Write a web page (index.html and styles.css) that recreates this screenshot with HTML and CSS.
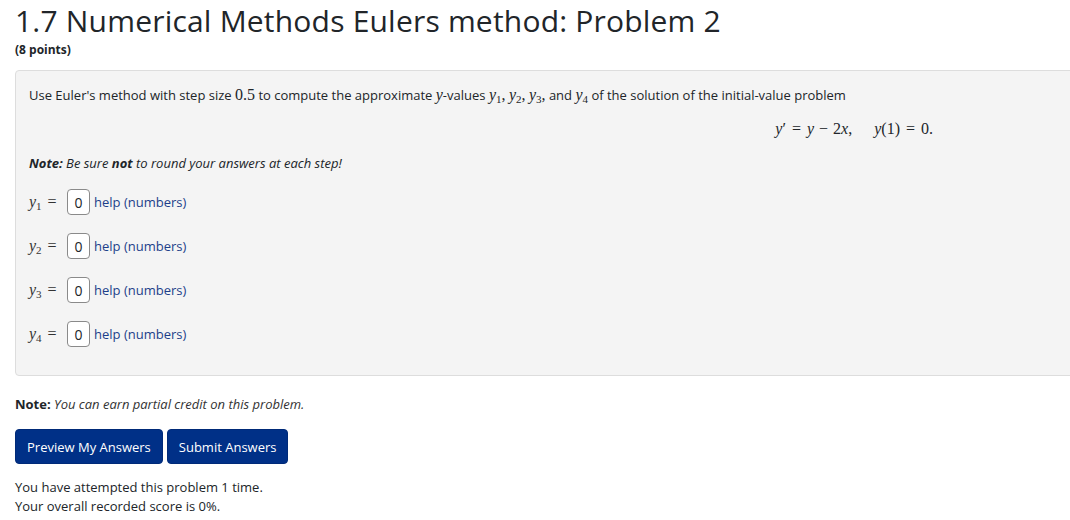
FILE: index.html
```html
<!DOCTYPE html>
<html>
<head>
<meta charset="utf-8">
<link rel="stylesheet" href="styles.css">
</head>
<body>
<div class="page">
  <h2 class="title">1.7 Numerical Methods Eulers method: Problem 2</h2>
  <div class="points">(8 points)</div>
  <div class="problem">
    <p class="intro">Use Euler's method with step size <span class="m">0.5</span> to compute the approximate <span class="mi">y</span>-values <span class="mi">y</span><sub class="sub">1</sub><span class="m">,</span> <span class="mi">y</span><sub class="sub">2</sub><span class="m">,</span> <span class="mi">y</span><sub class="sub">3</sub><span class="m">,</span> and <span class="mi">y</span><sub class="sub">4</sub> of the solution of the initial-value problem</p>
    <div class="display"><span class="mi">y</span><span class="m">&prime;</span><span class="rel">=</span><span class="mi">y</span><span class="bin">&minus;</span><span class="m">2</span><span class="mi">x</span><span class="m">,</span><span class="gap"></span><span class="mi">y</span><span class="m">(1)</span><span class="rel">=</span><span class="m">0.</span></div>
    <p class="note"><b>Note:</b> Be sure <b>not</b> to round your answers at each step!</p>
    <div class="answers">
      <div class="row"><span class="lbl"><span class="mi">y</span><sub class="sub">1</sub><span class="rel">=</span></span><span class="inp">0</span><a class="help">help (numbers)</a></div>
      <div class="row"><span class="lbl"><span class="mi">y</span><sub class="sub">2</sub><span class="rel">=</span></span><span class="inp">0</span><a class="help">help (numbers)</a></div>
      <div class="row"><span class="lbl"><span class="mi">y</span><sub class="sub">3</sub><span class="rel">=</span></span><span class="inp">0</span><a class="help">help (numbers)</a></div>
      <div class="row"><span class="lbl"><span class="mi">y</span><sub class="sub">4</sub><span class="rel">=</span></span><span class="inp">0</span><a class="help">help (numbers)</a></div>
    </div>
  </div>
  <p class="credit"><b>Note:</b> <i>You can earn partial credit on this problem.</i></p>
  <div class="buttons">
    <button class="btn">Preview My Answers</button>
    <button class="btn">Submit Answers</button>
  </div>
  <div class="status">
    <div>You have attempted this problem 1 time.</div>
    <div>Your overall recorded score is 0%.</div>
  </div>
</div>
</body>
</html>
```
FILE: styles.css
```css
html, body {
  margin: 0;
  padding: 0;
  background: #ffffff;
  overflow: hidden;
}
body {
  font-family: "Open Sans", "Noto Sans", sans-serif;
  color: #212529;
  font-size: 13px;
}
.page {
  padding-left: 15px;
}
.title {
  margin: 0;
  padding-top: 0;
  font-size: 30px;
  font-weight: 400;
  line-height: 41px;
  letter-spacing: 0.2px;
  color: #212529;
}
.points {
  font-size: 12px;
  font-weight: 700;
  line-height: 17px;
  margin-top: 0;
}
.problem {
  margin-top: 12px;
  width: calc(100% + 20px);
  background: #f4f4f4;
  border: 1px solid #dddddd;
  border-radius: 4px;
  box-sizing: border-box;
  padding: 14px 13px 20px 13px;
  height: 306px;
}
.intro {
  margin: 0;
  line-height: 20px;
}
.m, .rel, .bin {
  font-family: "Liberation Serif", "DejaVu Serif", serif;
  font-size: 16px;
}
.rel {
  margin: 0 6px;
}
.bin {
  margin: 0 5px;
}
.mi {
  font-family: "Liberation Serif", "DejaVu Serif", serif;
  font-style: italic;
  font-size: 16px;
}
.sub {
  font-family: "Liberation Serif", "DejaVu Serif", serif;
  font-size: 11px;
  vertical-align: -3px;
  line-height: 0;
}
.display {
  text-align: right;
  padding-right: 143px;
  margin-top: 14px;
  line-height: 20px;
}
.gap {
  display: inline-block;
  width: 22px;
}
.note {
  margin: 14px 0 0 0;
  font-style: italic;
  line-height: 20px;
}
.answers {
  margin-top: 16px;
  display: flex;
  flex-direction: column;
  gap: 18px;
}
.row {
  display: flex;
  align-items: center;
  height: 26px;
}
.lbl {
  width: 38px;
  color: #333;
  white-space: nowrap;
}
.lbl .rel {
  margin: 0 4px 0 6px;
}
.inp {
  display: inline-flex;
  align-items: center;
  justify-content: center;
  box-sizing: border-box;
  width: 23px;
  height: 26px;
  border: 1px solid #8a8a8a;
  border-radius: 4px;
  background: #ffffff;
  font-size: 14px;
  color: #212529;
  margin-right: 4px;
}
.help {
  color: #1d3f8a;
  text-decoration: none;
  font-size: 13px;
}
.credit {
  margin: 18px 0 0 0;
  line-height: 20px;
}
.credit i {
  color: #333;
}
.buttons {
  margin-top: 15px;
  display: flex;
  gap: 4px;
}
.btn {
  font-family: "Open Sans", "Noto Sans", sans-serif;
  font-size: 13px;
  color: #ffffff;
  background: #003087;
  border: 1px solid #002a78;
  border-radius: 4px;
  height: 35px;
  padding: 0 11px;
  cursor: pointer;
}
.status {
  margin-top: 14px;
  line-height: 19px;
}
```
